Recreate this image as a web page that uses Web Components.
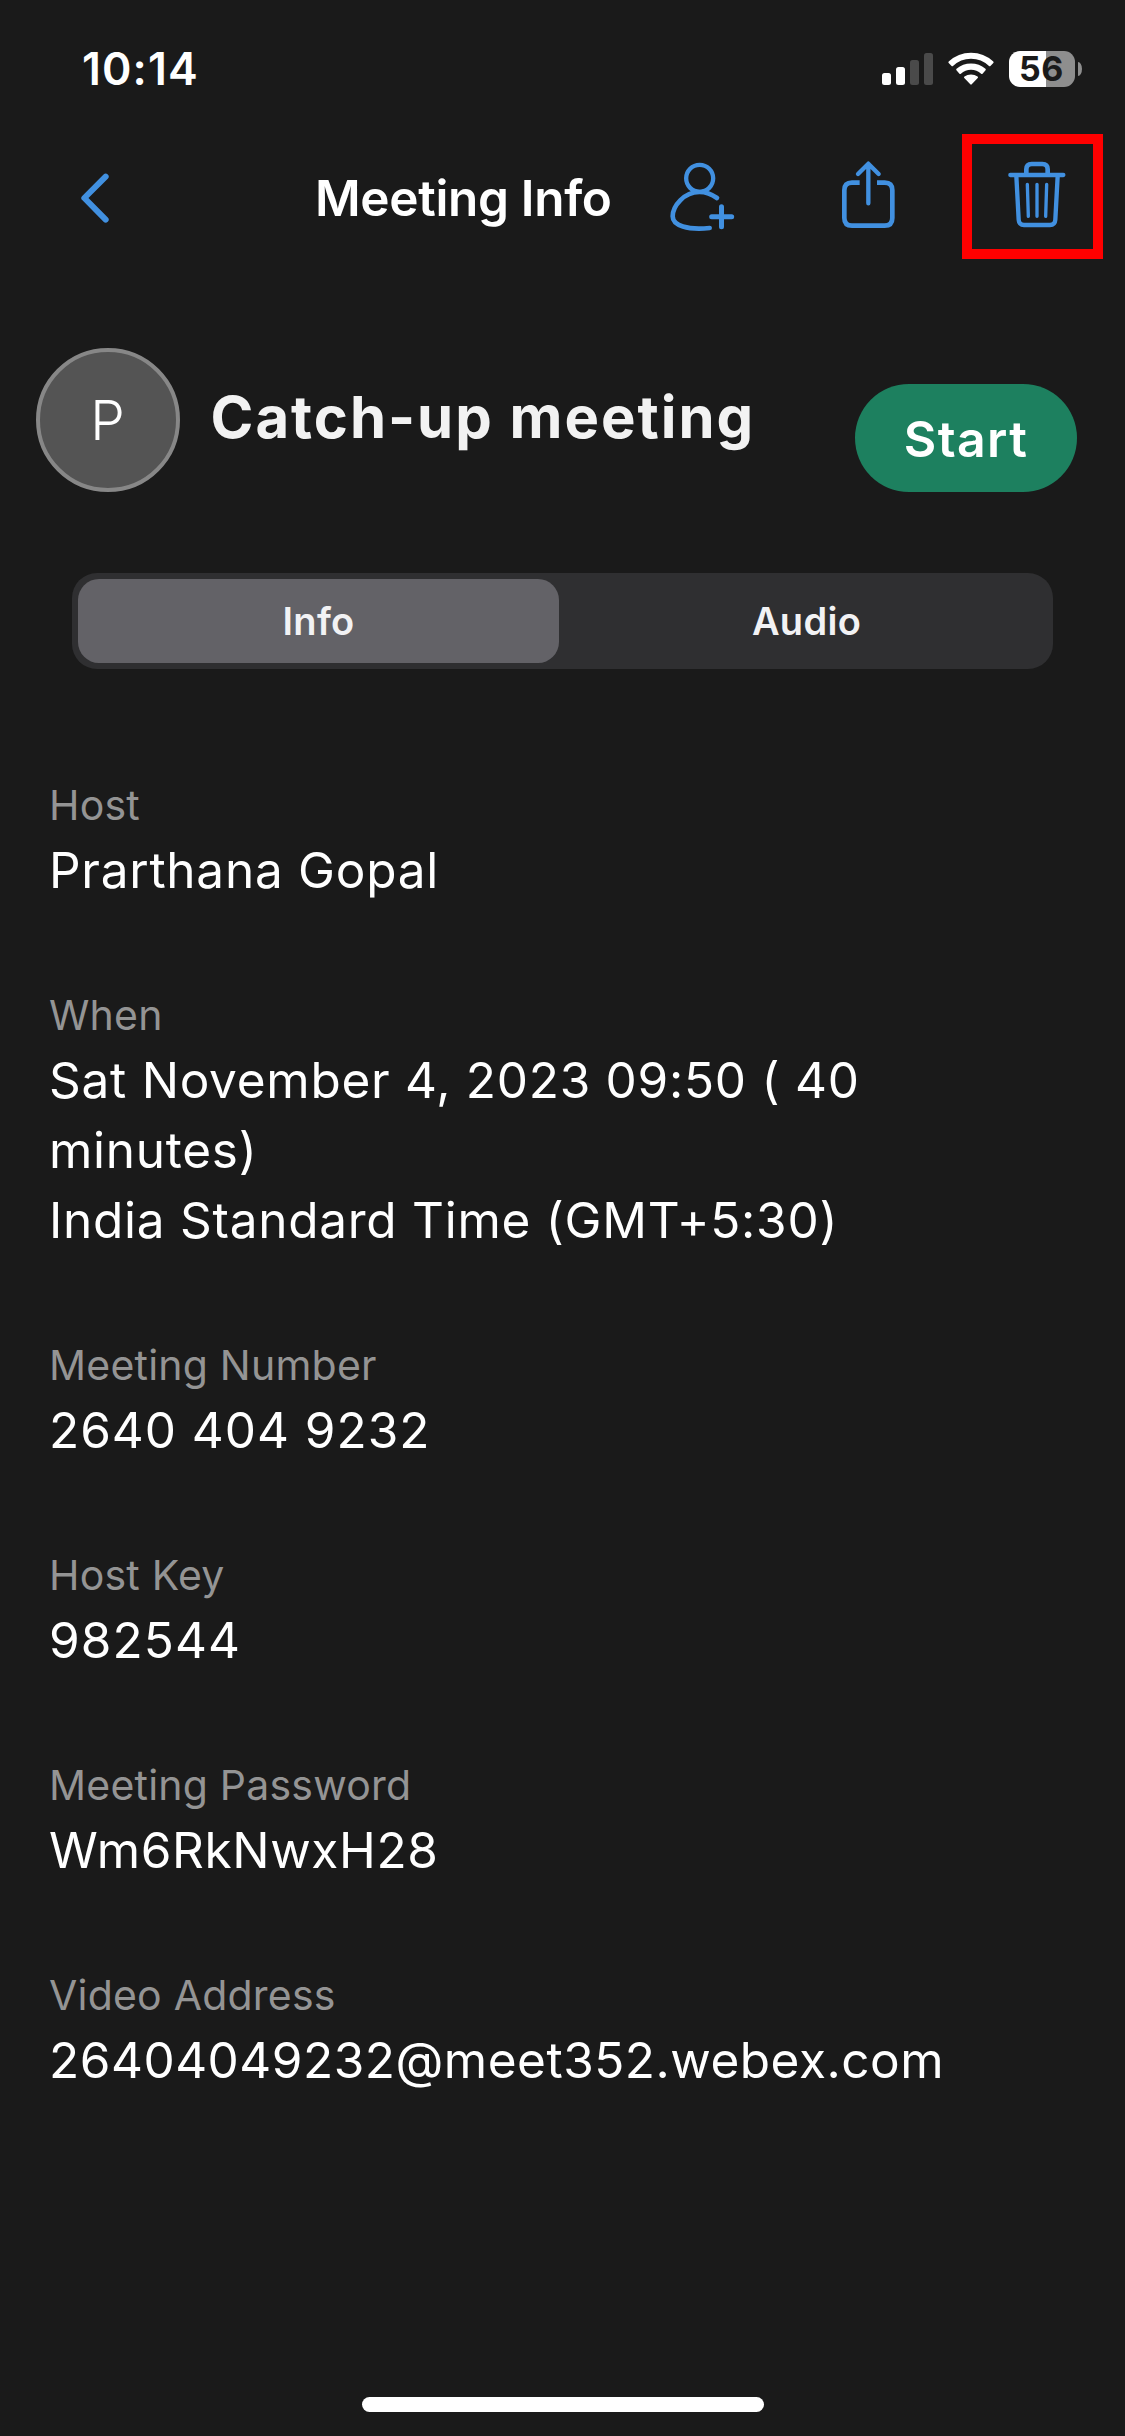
<!DOCTYPE html>
<html lang="en">
<head>
<meta charset="utf-8">
<title>Meeting Info</title>
<style>
body {
	margin: 0;
	background: #1a1a1a;
	color: #fff;
	font-family: Inter, "Liberation Sans", sans-serif;
}
</style>
</head>
<body>

<phone-screen>
	<status-bar slot="status" time="10:14" battery="56"></status-bar>

	<nav-bar slot="nav">
		Meeting Info
		<nav-icon slot="back" name="back"></nav-icon>
		<nav-icon slot="action" name="invite"></nav-icon>
		<nav-icon slot="action" name="share"></nav-icon>
		<nav-icon slot="action" name="trash" marked></nav-icon>
	</nav-bar>

	<meeting-header initial="P">
		Catch-up meeting
		<pill-button slot="action">Start</pill-button>
	</meeting-header>

	<segmented-control>
		<segment-item selected>Info</segment-item>
		<segment-item>Audio</segment-item>
	</segmented-control>

	<info-list>
		<info-field label="Host">Prarthana Gopal</info-field>
		<info-field label="When">Sat November 4, 2023 09:50 ( 40 minutes)<br>India Standard Time (GMT+5:30)</info-field>
		<info-field label="Meeting Number" style="letter-spacing: .97px">2640 404 9232</info-field>
		<info-field label="Host Key" style="letter-spacing: 1.1px">982544</info-field>
		<info-field label="Meeting Password" style="letter-spacing: .62px">Wm6RkNwxH28</info-field>
		<info-field label="Video Address" style="letter-spacing: .51px">26404049232@meet352.webex.com</info-field>
	</info-list>
</phone-screen>

<script>
class BaseElement extends HTMLElement {
	constructor() {
		super();
		this.attachShadow({mode:"open"});
	}

	connectedCallback() {
		this.shadowRoot.innerHTML = this.render();
	}
}

class PhoneScreen extends BaseElement {
	render() {
		return `
		<style>
		:host {
			display: flex;
			flex-direction: column;
			box-sizing: border-box;
			width: 1125px;
			height: 2436px;
			padding-bottom: 24px;
			overflow: hidden;
		}
		main { flex: 1; }
		.home {
			align-self: center;
			width: 402px;
			height: 15px;
			border-radius: 8px;
			background: #fff;
		}
		</style>
		<slot name="status"></slot>
		<slot name="nav"></slot>
		<main><slot></slot></main>
		<div class="home"></div>`;
	}
}

class StatusBar extends BaseElement {
	render() {
		const level = this.getAttribute("battery");
		return `
		<style>
		:host {
			display: flex;
			align-items: center;
			box-sizing: border-box;
			height: 134px;
			padding: 4px 43px 0 82px;
		}
		time {
			font-size: 44.7px;
			font-weight: 600;
			letter-spacing: 1.1px;
		}
		svg { display: block; }
		.signal { margin-left: auto; }
		.wifi { margin: 0 14px 0 13px; }
		.battery {
			width: 66px;
			height: 36px;
			border-radius: 11px;
			background: linear-gradient(90deg, #fff ${level}%, #8e8e8e ${level}%);
			color: #1a1a1a;
			font-size: 34px;
			font-weight: 700;
			line-height: 36px;
			letter-spacing: .7px;
			text-align: center;
			text-indent: -1px;
		}
		.nub {
			width: 4px;
			height: 14px;
			margin-left: 3px;
			border-radius: 0 4px 4px 0 / 0 7px 7px 0;
			background: #8e8e8e;
		}
		</style>
		<time>${this.getAttribute("time")}</time>
		<svg class="signal" width="52" height="32" viewBox="0 0 52 32">
			<g fill="#fff"><rect y="20" width="9" height="12" rx="2.5"/><rect x="14" y="14" width="9" height="18" rx="2.5"/></g>
			<g fill="#4a4a4a"><rect x="28" y="7" width="9" height="25" rx="2.5"/><rect x="42" width="9" height="32" rx="2.5"/></g>
		</svg>
		<svg class="wifi" width="48" height="34" viewBox="-24 -33 48 34" fill="#fff" stroke="#fff" stroke-width="2" stroke-linejoin="round">
			<path d="M-21.6 -22.7A31.6 31.6 0 0 1 21.6 -22.7L18.7 -19.7A27 27 0 0 0 -18.7 -19.7Z"/>
			<path d="M-13.8 -15.4A21 21 0 0 1 13.8 -15.4L10.8 -12A16 16 0 0 0 -10.8 -12Z"/>
			<path d="M-6 -7.6A10 10 0 0 1 6 -7.6L0 -1.4Z"/>
		</svg>
		<div class="battery">${level}</div>
		<div class="nub"></div>`;
	}
}

class NavBar extends BaseElement {
	render() {
		return `
		<style>
		:host {
			display: flex;
			align-items: center;
			height: 125px;
			padding: 0 58px 0 78px;
		}
		h1 {
			margin: 0 0 0 203px;
			padding-top: 3px;
			font-size: 49.5px;
			font-weight: 600;
			letter-spacing: -.32px;
			white-space: nowrap;
		}
		.actions {
			display: flex;
			align-items: center;
			gap: 105px;
			margin-left: auto;
		}
		</style>
		<slot name="back"></slot>
		<h1><slot></slot></h1>
		<div class="actions"><slot name="action"></slot></div>`;
	}
}

// [viewBox, markup], three viewBox units per pixel
const ICONS = {
	back: ["234 477 102 225", `<path stroke-width="18" d="M317 530L253 594L317 659"/>`],
	invite: ["84 117 201 225", `
		<circle cx="179" cy="175" r="40.5" stroke-width="13"/>
		<path stroke-width="14" d="M231 234C213 221 195 216 178 216C132 216 98 258 98 289C98 317 143 331 209 324"/>
		<path stroke-width="15" d="M215 290H275M244.5 260V320"/>`],
	share: ["600 117 171 225", `
		<path stroke-width="13" d="M685 133V250M654 162L685 131L716 162"/>
		<path stroke-width="14" stroke-linecap="butt" d="M659 188H636Q613 188 613 211V294Q613 317 636 317H734Q757 317 757 294V211Q757 188 734 188H711"/>`],
	trash: ["1101 117 180 225", `
		<path stroke-width="13" d="M1111 165H1270"/>
		<path stroke-width="14" stroke-linecap="butt" d="M1159 165V148Q1159 132 1175 132H1207Q1223 132 1223 148V165"/>
		<path stroke-width="13" stroke-linecap="butt" d="M1129 168L1136 299Q1137 315 1152 315H1230Q1245 315 1246 299L1253 168"/>
		<path stroke-width="10" d="M1162 193L1165 289M1191 193V289M1220 193L1217 289"/>`]
};

class NavIcon extends BaseElement {
	render() {
		const [viewBox, markup] = ICONS[this.getAttribute("name")];
		const [, , width, height] = viewBox.split(" ");
		return `
		<style>
		:host {
			display: block;
			position: relative;
			color: #4190e0;
		}
		:host([name=trash]) { margin-left: 5px; }
		:host([marked])::after {
			content: "";
			position: absolute;
			inset: -25px -36px -25px -45px;
			border: 10px solid #f00;
		}
		svg { display: block; }
		</style>
		<svg width="${width / 3}" height="${height / 3}" viewBox="${viewBox}" fill="none" stroke="currentColor" stroke-linecap="round" stroke-linejoin="round">${markup}</svg>`;
	}
}

class MeetingHeader extends BaseElement {
	render() {
		return `
		<style>
		:host {
			display: flex;
			align-items: flex-start;
			padding: 89px 48px 0 36px;
		}
		.avatar {
			display: flex;
			align-items: center;
			justify-content: center;
			box-sizing: border-box;
			width: 144px;
			height: 144px;
			border: 4px solid #878787;
			border-radius: 50%;
			background: #545454;
			font-size: 55px;
			font-weight: 300;
			text-indent: -1px;
		}
		h2 {
			flex: 1;
			margin: 34px 0 0 30.5px;
			color: #f2f2f2;
			font-size: 58px;
			font-weight: 700;
			line-height: 70px;
			letter-spacing: 2px;
		}
		slot[name=action] { display: block; margin-top: 36px; }
		</style>
		<div class="avatar">${this.getAttribute("initial")}</div>
		<h2><slot></slot></h2>
		<slot name="action"></slot>`;
	}
}

class PillButton extends BaseElement {
	render() {
		return `
		<style>
		:host { display: block; }
		button {
			width: 222px;
			height: 108px;
			padding: 1px 0 0;
			border: 0;
			border-radius: 54px;
			background: #1d805f;
			color: #fff;
			font: 600 50px Inter, "Liberation Sans", sans-serif;
			letter-spacing: 1.38px;
		}
		</style>
		<button><slot></slot></button>`;
	}
}

class SegmentedControl extends BaseElement {
	render() {
		return `
		<style>
		:host {
			display: grid;
			grid-template-columns: 1fr 1fr;
			gap: 7px;
			box-sizing: border-box;
			height: 96px;
			margin: 81px 72px 0;
			padding: 6px;
			border-radius: 25px;
			background: #2f2f31;
		}
		</style>
		<slot></slot>`;
	}
}

class SegmentItem extends BaseElement {
	render() {
		return `
		<style>
		:host {
			display: flex;
			align-items: center;
			justify-content: center;
			border-radius: 21px;
			color: #f2f2f4;
			font-size: 38px;
			font-weight: 600;
			letter-spacing: .3px;
		}
		:host([selected]) { background: #636267; }
		</style>
		<slot></slot>`;
	}
}

class InfoList extends BaseElement {
	render() {
		return `
		<style>
		:host {
			display: flex;
			flex-direction: column;
			gap: 85px;
			padding: 111px 60px 0 49px;
		}
		</style>
		<slot></slot>`;
	}
}

class InfoField extends BaseElement {
	render() {
		return `
		<style>
		:host {
			display: block;
			letter-spacing: .74px;
		}
		.label {
			margin-bottom: 5px;
			color: #949494;
			font-size: 41px;
			line-height: 50px;
			letter-spacing: .22px;
		}
		.value {
			font-size: 49.5px;
			line-height: 70px;
		}
		</style>
		<div class="label">${this.getAttribute("label")}</div>
		<div class="value"><slot></slot></div>`;
	}
}

customElements.define("phone-screen", PhoneScreen);
customElements.define("status-bar", StatusBar);
customElements.define("nav-bar", NavBar);
customElements.define("nav-icon", NavIcon);
customElements.define("meeting-header", MeetingHeader);
customElements.define("pill-button", PillButton);
customElements.define("segmented-control", SegmentedControl);
customElements.define("segment-item", SegmentItem);
customElements.define("info-list", InfoList);
customElements.define("info-field", InfoField);
</script>
</body>
</html>
